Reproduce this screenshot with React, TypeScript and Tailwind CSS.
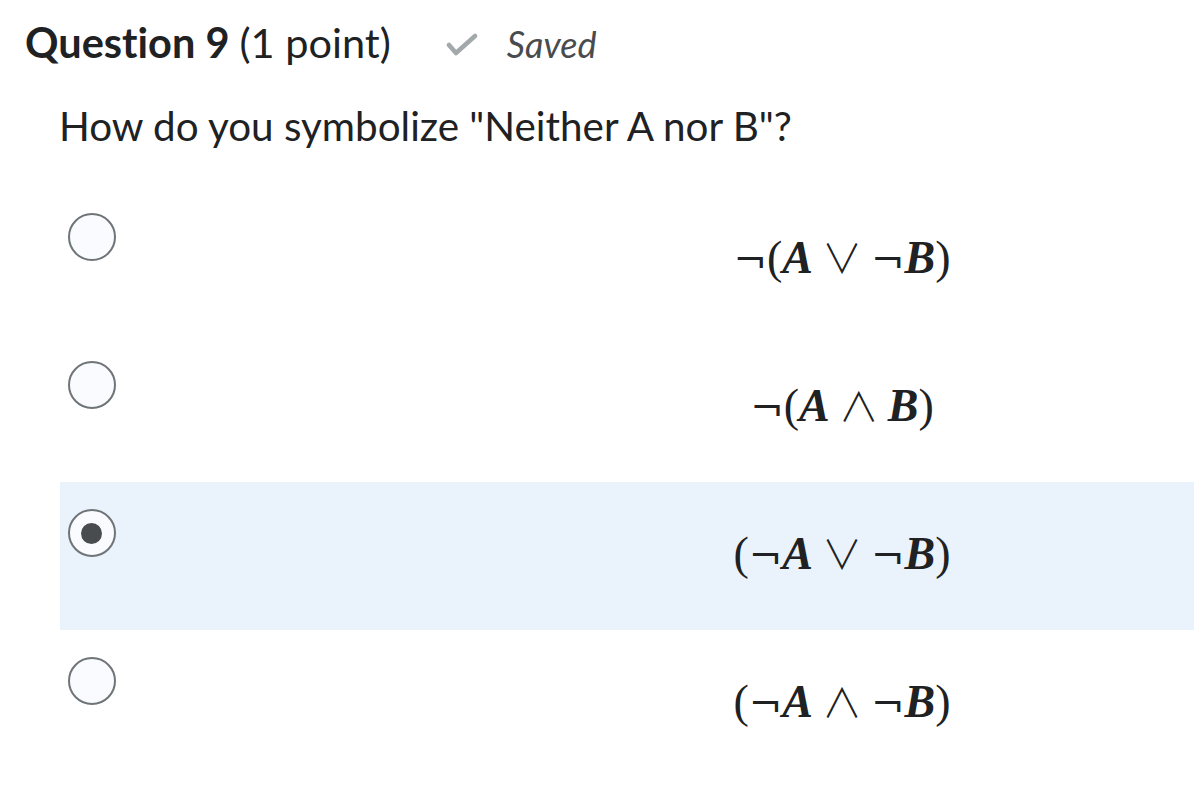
import React, { useState } from 'react';

// tokens: v = variable (italic), o = binary operator, n = negation, t = plain text
type Tok = [string, 'v' | 'o' | 'n' | 't'];

const options: { id: string; toks: Tok[] }[] = [
  { id: 'a', toks: [['¬', 'n'], ['(', 't'], ['A', 'v'], ['∨', 'o'], ['¬', 'n'], ['B', 'v'], [')', 't']] },
  { id: 'b', toks: [['¬', 'n'], ['(', 't'], ['A', 'v'], ['∧', 'o'], ['B', 'v'], [')', 't']] },
  { id: 'c', toks: [['(', 't'], ['¬', 'n'], ['A', 'v'], ['∨', 'o'], ['¬', 'n'], ['B', 'v'], [')', 't']] },
  { id: 'd', toks: [['(', 't'], ['¬', 'n'], ['A', 'v'], ['∧', 'o'], ['¬', 'n'], ['B', 'v'], [')', 't']] },
];

function Formula({ toks }: { toks: Tok[] }) {
  return (
    <span className="text-[46px] leading-none text-[#202122] whitespace-pre" style={{ fontFamily: '"Liberation Serif", "DejaVu Serif", serif' }}>
      {toks.map(([s, k], i) => {
        if (k === 'v') return <span key={i} className="italic font-bold">{s}</span>;
        if (k === 'o')
          return (
            <span key={i} className="mx-[9px] text-[40px] font-light" style={{ fontFamily: '"Noto Sans CJK JP", "DejaVu Sans", sans-serif' }}>
              {s}
            </span>
          );
        if (k === 'n')
          return (
            <span key={i} className="text-[40px]" style={{ fontFamily: '"DejaVu Serif", serif' }}>
              {s}
            </span>
          );
        return <span key={i}>{s}</span>;
      })}
    </span>
  );
}

function Radio({ checked }: { checked: boolean }) {
  return (
    <div className="w-[48px] h-[48px] rounded-full border-2 border-[#6e7477] bg-[#f9fbff] flex items-center justify-center">
      {checked && <div className="w-[21px] h-[21px] rounded-full bg-[#494c4e]" />}
    </div>
  );
}

export default function App() {
  const [selected, setSelected] = useState('c');

  return (
    <div
      className="w-[1194px] h-[798px] bg-white overflow-hidden text-[#202122]"
      style={{ fontFamily: 'Lato, "Liberation Sans", sans-serif', fontVariantLigatures: 'none' }}
    >
      <div className="flex items-baseline pl-[25px] pt-[18px] text-[41.5px] leading-[1.2]">
        <span className="font-bold">Question 9</span>
        <span className="ml-[10px]">(1 point)</span>
        <span className="ml-[55px] flex items-baseline text-[#494c4e]">
          <svg width="32" height="24" viewBox="0 0 32 24" className="self-center mr-[29px]">
            <polyline points="3,12 10,20 29,3" fill="none" stroke="#a3a8ab" strokeWidth="4.5" strokeLinecap="round" strokeLinejoin="round" />
          </svg>
          <span className="italic text-[36px]">Saved</span>
        </span>
      </div>

      <p className="pl-[59px] mt-[34px] text-[40.4px] leading-[1.2]">How do you symbolize "Neither A nor B"?</p>

      <div className="mt-[36px] ml-[60px]">
        {options.map((o) => (
          <div
            key={o.id}
            onClick={() => setSelected(o.id)}
            className={`flex h-[148px] cursor-pointer ${selected === o.id ? 'bg-[#eaf2fc]' : 'bg-white'}`}
          >
            <div className="w-[63px] flex justify-center pt-[27px]">
              <Radio checked={selected === o.id} />
            </div>
            <div className="flex-1 flex items-center justify-center pl-[367px] pb-[4px]">
              <Formula toks={o.toks} />
            </div>
          </div>
        ))}
      </div>
    </div>
  );
}
